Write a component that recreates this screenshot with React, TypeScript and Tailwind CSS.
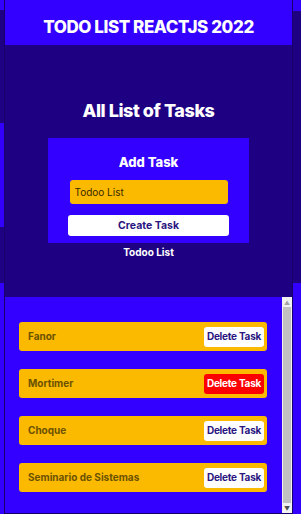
import React, { useState } from 'react';

interface Task {
  id: number;
  name: string;
  hot?: boolean;
}

const initialTasks: Task[] = [
  { id: 1, name: 'Fanor' },
  { id: 2, name: 'Mortimer', hot: true },
  { id: 3, name: 'Choque' },
  { id: 4, name: 'Seminario de Sistemas' },
];

function TaskRow({ task }: { task: Task }) {
  return (
    <div className="flex items-center justify-between h-[29px] bg-[#fbb900] rounded-[3px] pl-[9px] pr-[3px]">
      <span className="text-[10px] font-bold text-[#6b5200]">{task.name}</span>
      <button
        className={
          task.hot
            ? 'h-[20px] w-[60px] rounded-[3px] bg-[#ff0000] text-white text-[10px] font-bold tracking-tight'
            : 'h-[20px] w-[60px] rounded-[3px] bg-white text-[#2a1580] text-[10px] font-bold tracking-tight'
        }
      >
        Delete Task
      </button>
    </div>
  );
}

export default function App() {
  const [tasks] = useState<Task[]>(initialTasks);
  const [value, setValue] = useState('Todoo List');

  return (
    <div
      className="flex w-[301px] h-[514px] overflow-hidden bg-[#3300ff]"
      style={{ fontFamily: 'Inter, "Open Sans", sans-serif' }}
    >
      {/* left edge strip */}
      <div className="flex flex-col w-[4px] shrink-0">
        <div className="h-[10px] bg-[#3300ff]" />
        <div className="h-[113px] bg-[#1e0082]" />
        <div className="h-[104px] bg-[#3300ff]" />
        <div className="h-[56px] bg-[#1e0082]" />
        <div className="flex-1 bg-[#3300ff]" />
      </div>

      <div className="flex flex-col w-[289px] shrink-0 border-x border-b border-[#18006a]">
        <header className="h-[45px] bg-[#3300ff] flex items-end justify-center pb-[5px]">
          <h1 className="text-white font-extrabold text-[17px] tracking-tight">TODO LIST REACTJS 2022</h1>
        </header>

        <section className="h-[252px] bg-[#1e0082] flex flex-col items-center pt-[52px]">
          <h2 className="text-white font-extrabold text-[18px] tracking-tight leading-[28px]">All List of Tasks</h2>
          <div className="mt-[13px] w-[201px] h-[105px] bg-[#3300ff] flex flex-col items-center pt-[14px]">
            <h3 className="text-white font-extrabold text-[13px] leading-[20px]">Add Task</h3>
            <input
              value={value}
              onChange={(e) => setValue(e.target.value)}
              className="mt-[8px] w-[158px] h-[24px] bg-[#fbb900] rounded-[3px] px-[5px] text-[10px] text-[#3a2a00] outline-none caret-black"
            />
            <button className="mt-[11px] w-[161px] h-[21px] bg-white rounded-[3px] text-[10.5px] font-bold text-[#2a1580]">
              Create Task
            </button>
          </div>
          <p className="mt-[2px] text-white font-bold text-[10px]">Todoo List</p>
        </section>

        <div className="flex flex-1 min-h-0 bg-[#3300ff]">
          <div className="flex-1 flex flex-col gap-[18px] pt-[25px] pl-[14px] pr-[15px]">
            {tasks.map((t) => (
              <TaskRow key={t.id} task={t} />
            ))}
          </div>
          {/* scrollbar */}
          <div className="w-[10px] flex flex-col bg-[#f1f1f1]">
            <div className="h-[10px] flex items-center justify-center text-[6px] text-[#a3a3a3]">▲</div>
            <div className="flex-1 mx-[1px] bg-[#c1c1c1]" />
            <div className="h-[10px] flex items-center justify-center text-[6px] text-[#505050]">▼</div>
          </div>
        </div>
      </div>

      {/* right edge strip */}
      <div className="flex flex-col flex-1">
        <div className="h-[11px] bg-[#3300ff]" />
        <div className="h-[272px] bg-[#1e0082]" />
        <div className="flex-1 bg-[#3300ff]" />
      </div>
    </div>
  );
}
